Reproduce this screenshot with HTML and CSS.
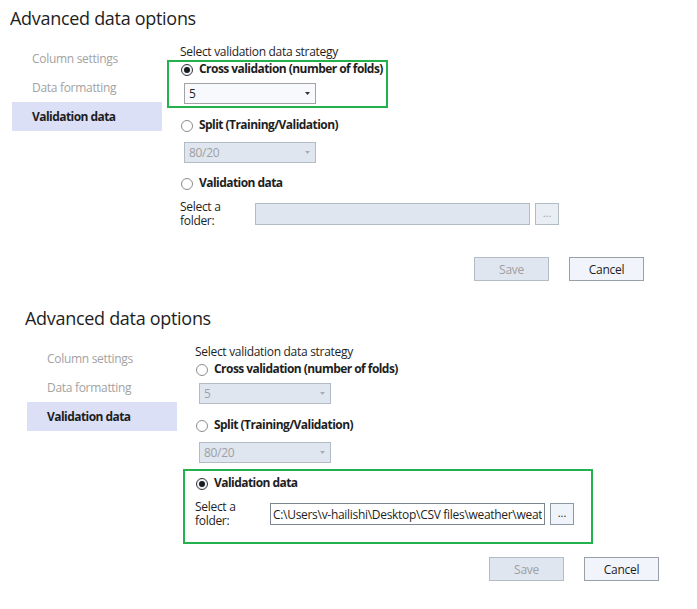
FILE: index.html
```html
<!DOCTYPE html>
<html lang="en">
<head>
  <meta charset="UTF-8" />
  <meta name="viewport" content="width=device-width, initial-scale=1.0"/>
  <title>Advanced data options</title>
  <link rel="stylesheet" href="styles.css">
</head>
<body>

  <!-- Step 1: cross validation picked -->
  <div class="panel">
    <h1>Advanced data options</h1>

    <div class="panel-body">
      <ul class="side-nav">
        <li>Column settings</li>
        <li>Data formatting</li>
        <li class="active">Validation data</li>
      </ul>

      <div class="options">
        <div class="options-title">Select validation data strategy</div>

        <div class="group group-folds highlight highlight-folds">
          <div class="radio-row"><span class="radio checked"></span>Cross validation (number of folds)</div>
          <div class="combo">
            <span>5</span>
            <svg width="5" height="3" viewBox="0 0 5 3"><path d="M0 0h5L2.5 3z"/></svg>
          </div>
        </div>

        <div class="group group-split">
          <div class="radio-row"><span class="radio"></span>Split (Training/Validation)</div>
          <div class="combo disabled">
            <span>80/20</span>
            <svg width="5" height="3" viewBox="0 0 5 3"><path d="M0 0h5L2.5 3z"/></svg>
          </div>
        </div>

        <div class="group group-folder">
          <div class="radio-row"><span class="radio"></span>Validation data</div>
          <div class="folder-row">
            <label class="folder-label">Select a folder:</label>
            <input class="path-box" type="text" value="" disabled>
            <div class="browse-btn disabled">...</div>
          </div>
        </div>
      </div>
    </div>

    <div class="actions">
      <button class="btn" disabled>Save</button>
      <button class="btn">Cancel</button>
    </div>
  </div>

  <!-- Step 2: validation data folder picked -->
  <div class="panel panel-second">
    <h1>Advanced data options</h1>

    <div class="panel-body">
      <ul class="side-nav">
        <li>Column settings</li>
        <li>Data formatting</li>
        <li class="active">Validation data</li>
      </ul>

      <div class="options">
        <div class="options-title">Select validation data strategy</div>

        <div class="group group-folds">
          <div class="radio-row"><span class="radio"></span>Cross validation (number of folds)</div>
          <div class="combo disabled">
            <span>5</span>
            <svg width="5" height="3" viewBox="0 0 5 3"><path d="M0 0h5L2.5 3z"/></svg>
          </div>
        </div>

        <div class="group group-split">
          <div class="radio-row"><span class="radio"></span>Split (Training/Validation)</div>
          <div class="combo disabled">
            <span>80/20</span>
            <svg width="5" height="3" viewBox="0 0 5 3"><path d="M0 0h5L2.5 3z"/></svg>
          </div>
        </div>

        <div class="group group-folder highlight highlight-folder">
          <div class="radio-row"><span class="radio checked"></span>Validation data</div>
          <div class="folder-row">
            <label class="folder-label">Select a folder:</label>
            <input class="path-box" type="text" value="C:\Users\v-hailishi\Desktop\CSV files\weather\weather.csv" readonly>
            <div class="browse-btn">...</div>
          </div>
        </div>
      </div>
    </div>

    <div class="actions">
      <button class="btn" disabled>Save</button>
      <button class="btn">Cancel</button>
    </div>
  </div>

</body>
</html>
```

FILE: styles.css
```css
body {
  margin: 0;
  background-color: #ffffff;
  font-family: "Open Sans", "Noto Sans", sans-serif;
  font-size: 12px;
  letter-spacing: -0.3px;
  color: #1e1e1e;
}

.panel {
  width: 644px;
  height: 300px;
  box-sizing: border-box;
  padding-top: 5px;
}

.panel-second {
  margin-left: 15px;
}

h1 {
  margin: 0 0 13px 10px;
  font-size: 18px;
  font-weight: normal;
  line-height: 26px;
  letter-spacing: -0.3px;
  color: #1e1e1e;
}

.panel-body {
  display: flex;
  height: 184px;
}

/* left menu */
.side-nav {
  list-style: none;
  margin: 0 0 0 12px;
  padding: 0;
  width: 150px;
}

.side-nav li {
  height: 29px;
  line-height: 29px;
  padding-left: 20px;
  color: #a2a2a2;
}

.side-nav li.active {
  background-color: #dbe0f7;
  color: #1e1e1e;
  font-weight: bold;
  letter-spacing: -0.55px;
}

/* strategy options */
.options {
  margin-left: 18px;
  flex-grow: 1;
}

.options-title {
  line-height: 16px;
}

.group {
  position: relative;
}

.group-folds {
  margin-top: 2px;
}

.group-split {
  margin-top: 14px;
}

.group-folder {
  margin-top: 13px;
}

.highlight::before {
  content: "";
  position: absolute;
  box-sizing: border-box;
  border: 2px solid #22b14c;
  pointer-events: none;
}

.highlight-folds::before {
  top: -2px;
  bottom: -4px;
  left: -13px;
  width: 221px;
}

.highlight-folder::before {
  top: -7px;
  bottom: -16px;
  left: -12px;
  width: 410px;
}

.radio-row {
  display: flex;
  align-items: flex-start;
  line-height: 14px;
  font-weight: bold;
  letter-spacing: -0.55px;
  white-space: nowrap;
}

.radio {
  width: 12px;
  height: 12px;
  box-sizing: border-box;
  margin: 2px 6px 0 1px;
  border: 1px solid #8c8c8c;
  border-radius: 50%;
  background-color: #ffffff;
  position: relative;
}

.radio.checked {
  border-color: #333333;
  background-color: #eef2fa;
}

.radio.checked::after {
  content: "";
  position: absolute;
  top: 2px;
  left: 2px;
  width: 6px;
  height: 6px;
  border-radius: 50%;
  background-color: #1a1a1a;
}

.combo {
  display: flex;
  align-items: center;
  justify-content: space-between;
  width: 132px;
  height: 21px;
  box-sizing: border-box;
  margin: 7px 0 0 4px;
  padding: 0 5px 0 4px;
  border: 1px solid #a3a3a3;
  background-color: #f7f9fd;
  color: #1e1e1e;
}

.combo svg {
  fill: #333333;
}

.combo.disabled {
  border-color: #b3bbc4;
  background-color: #dfe6f0;
  color: #a0a0a0;
}

.combo.disabled svg {
  fill: #a8adb3;
}

.group-split .combo {
  margin-top: 10px;
}

.folder-row {
  display: flex;
  margin-top: 10px;
}

.folder-label {
  width: 60px;
  margin-right: 15px;
  line-height: 14px;
}

.path-box {
  width: 275px;
  height: 22px;
  box-sizing: border-box;
  margin: 3px 0 0 0;
  padding: 0 2px;
  border: 1px solid #7d8590;
  border-radius: 0;
  background-color: #ffffff;
  font-family: inherit;
  font-size: 12px;
  letter-spacing: -0.3px;
  color: #1e1e1e;
  outline: none;
}

.path-box:disabled {
  border-color: #b3bbc4;
  background-color: #dfe6f0;
}

.browse-btn {
  width: 24px;
  height: 22px;
  box-sizing: border-box;
  margin: 3px 0 0 5px;
  border: 1px solid #8d97a5;
  background-color: #eff3fa;
  text-align: center;
  line-height: 18px;
  font-size: 11px;
  letter-spacing: 0;
}

.browse-btn.disabled {
  border-color: #b3bbc4;
  background-color: #e9eef5;
  color: #a0a0a0;
}

/* bottom buttons */
.actions {
  display: flex;
  justify-content: flex-end;
  gap: 20px;
  margin-top: 29px;
}

.btn {
  width: 75px;
  height: 24px;
  padding: 0;
  border: 1px solid #9aa0a8;
  background-color: #f1f5fb;
  font-family: inherit;
  font-size: 12px;
  letter-spacing: -0.3px;
  color: #1e1e1e;
}

.btn:disabled {
  border-color: #b3bbc4;
  background-color: #dfe6f0;
  color: #a0a0a0;
}
```
